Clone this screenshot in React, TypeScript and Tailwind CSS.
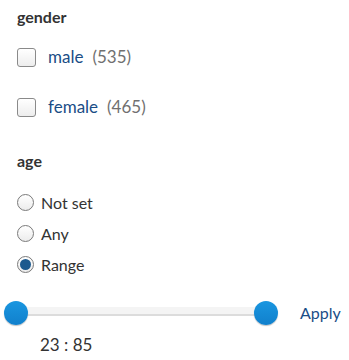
import React from "react";

const Checkbox = () => (
    <span className="w-[19px] h-[19px] rounded-[3px] border border-[#8a8a8a] bg-gradient-to-b from-white to-[#ededed] shrink-0" />
);

const Radio = ({ checked }: { checked?: boolean }) => (
    <span className="w-[17px] h-[17px] rounded-full border border-[#7a7a7a] bg-gradient-to-b from-white to-[#ececec] shrink-0 flex items-center justify-center">
        {checked && <span className="w-[11px] h-[11px] rounded-full bg-[#1d5a8e]" />}
    </span>
);

const Thumb = ({ className }: { className: string }) => (
    <span
        className={`absolute top-0 w-[24px] h-[24px] rounded-full bg-gradient-to-b from-[#1a96e0] to-[#1180cc] shadow-[0_1px_1px_rgba(0,0,0,0.25)] ${className}`}
    />
);

export default function App() {
    return (
        <div className="w-[349px] h-[360px] bg-white font-['Lato',sans-serif] text-[16px] text-[#333] pl-[17px]">
            <div className="h-[34px] flex items-center font-bold text-[16px] text-[#333]">gender</div>
            <label className="h-[46px] flex items-center gap-[12px] text-[17px]">
                <Checkbox />
                <span className="text-[#1a4d86]">male</span>
                <span className="text-[#707070] -ml-[3px]">(535)</span>
            </label>
            <label className="h-[54px] flex items-center gap-[12px] text-[17px]">
                <Checkbox />
                <span className="text-[#1a4d86]">female</span>
                <span className="text-[#707070] -ml-[3px]">(465)</span>
            </label>
            <div className="h-[53px] flex items-center font-bold text-[16px] text-[#333]">age</div>
            {["Not set", "Any", "Range"].map((l, i) => (
                <label key={l} className="h-[31px] flex items-center gap-[7px] text-[#333]">
                    <Radio checked={i === 2} />
                    <span>{l}</span>
                </label>
            ))}
            <div className="-ml-[13px] mt-[21px] flex items-center">
                <div className="relative w-[274px] h-[24px]">
                    <div className="absolute left-[12px] right-[12px] top-[6px] h-[9px] bg-[#f4f4f4] border-b-2 border-[#dcdcdc]" />
                    <Thumb className="left-0" />
                    <Thumb className="right-0" />
                </div>
                <span className="ml-[22px] text-[#1a4d86]">Apply</span>
            </div>
            <div className="mt-[10px] ml-[23px] leading-[20px] text-[#333] text-[17px]">23 : 85</div>
        </div>
    );
}
